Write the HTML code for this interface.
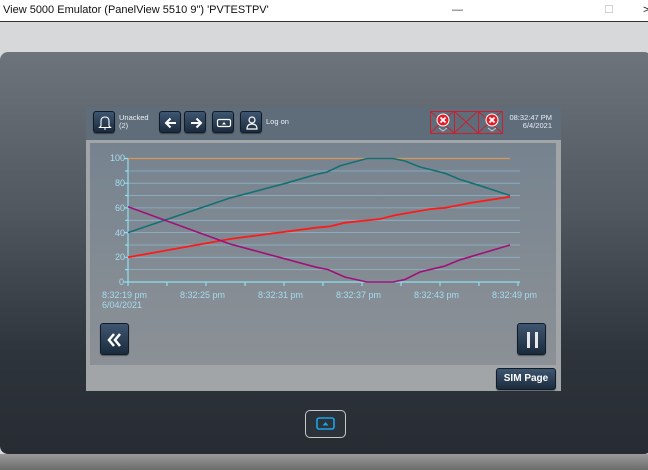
<!DOCTYPE html>
<html><head><style>
*{margin:0;padding:0;box-sizing:border-box}
body{width:648px;height:470px;overflow:hidden;background:#d6d8da;font-family:"Liberation Sans",sans-serif;position:relative}
.abs{position:absolute}
.title{left:0;top:0;width:648px;height:22px;background:#fff;border-bottom:1px solid #333;font-size:11px;color:#111;line-height:21px;padding-left:3px}
.bezel{left:0;top:52px;width:652px;height:402px;border-radius:8px;background:linear-gradient(#6d747b 0%,#50575f 40%,#2e343b 75%,#272c33 100%)}
.bottom{left:0;top:454px;width:648px;height:16px;background:linear-gradient(#9a9a9a,#6c6c6c)}
.screen{left:86px;top:107px;width:475px;height:284px;background:#a2a5a8}
.hdr{left:86px;top:107px;width:475px;height:33px;background:#5f6d7b}
.btn{position:absolute;border-radius:3px;background:linear-gradient(#3e5670,#1b2b3d);border:1px solid #111c28;box-shadow:0 1px 1px rgba(0,0,0,.4);color:#fff}
.chartbg{left:90px;top:143px;width:466px;height:222px;background:linear-gradient(#76838f,#868d94 70%,#8b9096)}
.lbl{position:absolute;font-size:9px;color:#a6dcef}
.w{color:#e8eef4;font-size:7.5px;line-height:8px}
</style></head><body>
<div class="abs title">View 5000 Emulator (PanelView 5510 9") 'PVTESTPV'<span style="position:absolute;left:452px;color:#444">—</span><span style="position:absolute;left:604px;color:#bbb">☐</span><span style="position:absolute;left:643px">&gt;</span></div>
<div class="abs bezel"></div>
<div class="abs bottom"></div>
<div class="abs screen"></div>
<div class="abs hdr"></div>
<div class="btn" style="left:93px;top:111px;width:22px;height:22px"><svg width="22" height="22"><path d="M7 14 L7 9 Q7 5 11 5 Q15 5 15 9 L15 14 L16.5 15.5 L5.5 15.5 Z M10 17 h2" stroke="#fff" fill="none" stroke-width="1.1"/></svg></div>
<div class="abs w" style="left:119px;top:114px">Unacked<br>(2)</div>
<div class="btn" style="left:159px;top:111px;width:22px;height:22px"><svg width="22" height="22"><path d="M16 11 H6 M10.5 6.5 L6 11 L10.5 15.5" stroke="#fff" fill="none" stroke-width="2"/></svg></div>
<div class="btn" style="left:184px;top:111px;width:22px;height:22px"><svg width="22" height="22"><path d="M6 11 H16 M11.5 6.5 L16 11 L11.5 15.5" stroke="#fff" fill="none" stroke-width="2"/></svg></div>
<div class="btn" style="left:212px;top:111px;width:22px;height:22px"><svg width="22" height="22"><rect x="4.5" y="7.5" width="13" height="7" rx="1.5" stroke="#fff" fill="none" stroke-width="1.2"/><path d="M9 12.5 L11 10 L13 12.5Z" fill="#fff"/></svg></div>
<div class="btn" style="left:240px;top:111px;width:22px;height:22px"><svg width="22" height="22"><circle cx="11" cy="8" r="3" stroke="#fff" fill="none" stroke-width="1.2"/><path d="M6 17 Q6 12 11 12 Q16 12 16 17 Z" stroke="#fff" fill="none" stroke-width="1.2"/></svg></div>
<div class="abs w" style="left:266px;top:118px">Log on</div>
<svg class="abs" style="left:430px;top:111px" width="74" height="23">
<g stroke="#c8202c" fill="none" stroke-width="1"><rect x="0.5" y="0.5" width="24" height="22"/><rect x="24.5" y="0.5" width="24" height="22"/><rect x="48.5" y="0.5" width="24" height="22"/><path d="M0 0L24 22M24 0L0 22M24 0L48 22M48 0L24 22M48 0L72 22M72 0L48 22"/></g>
<g><circle cx="13" cy="9" r="6" fill="#e0202c" stroke="#fff"/><path d="M10.5 6.5l5 5M15.5 6.5l-5 5" stroke="#fff" stroke-width="1.8"/><path d="M9 17l4 3 4-3" stroke="#ccc" fill="none"/></g>
<g><circle cx="62" cy="9" r="6" fill="#e0202c" stroke="#fff"/><path d="M59.5 6.5l5 5M64.5 6.5l-5 5" stroke="#fff" stroke-width="1.8"/><path d="M58 17l4 3 4-3" stroke="#ccc" fill="none"/></g>
</svg>
<div class="abs w" style="left:500px;top:114px;width:52px;text-align:right">08:32:47 PM<br>6/4/2021</div>
<div class="abs chartbg"></div>
<svg class="abs" style="left:0;top:0" width="648" height="470">
<g stroke="#93c0d8" stroke-width="0.8" opacity="0.8">
<line x1="128" x2="520" y1="171" y2="171"/><line x1="128" x2="520" y1="183.2" y2="183.2"/><line x1="128" x2="520" y1="195.5" y2="195.5"/><line x1="128" x2="520" y1="207.9" y2="207.9"/><line x1="128" x2="520" y1="220.3" y2="220.3"/><line x1="128" x2="520" y1="232.6" y2="232.6"/><line x1="128" x2="520" y1="245" y2="245"/><line x1="128" x2="520" y1="257.3" y2="257.3"/><line x1="128" x2="520" y1="269.6" y2="269.6"/>
</g>
<g stroke="#8fe0f0" stroke-width="1.2">
<line x1="128" x2="128" y1="158" y2="286"/><line x1="124" x2="520" y1="282" y2="282"/>
<path d="M124 158.5h4M124 183.2h4M124 207.9h4M124 232.6h4M124 257.3h4M125 171h3M125 195.5h3M125 220.3h3M125 245h3M125 269.6h3"/>
<path d="M167 282v4M206 282v4M245 282v4M284 282v4M323 282v4M362 282v4M401 282v4M440 282v4M479 282v4M518 282v4"/>
</g>
<line x1="128" x2="510" y1="158.5" y2="158.5" stroke="#d7955a" stroke-width="1.3"/>
<polyline fill="none" stroke="#137073" stroke-width="1.6" points="128,232.6 230,198 286,183.2 316,174.5 327,172 340,165.9 367,158.5 393,158.5 405,161 420,167 440,172 445,173.3 460,179.5 480,185.7 510,195.5"/>
<polyline fill="none" stroke="#ff1a1a" stroke-width="1.8" points="128,257.3 230,239 316,227.7 330,226.4 345,222.7 380,219 395,215.3 430,209.1 445,207.9 470,203 510,196.8"/>
<polyline fill="none" stroke="#a0107a" stroke-width="1.6" points="128,206.7 230,244 316,267.2 328,269.6 345,277.1 367,282 393,282 405,279.5 420,272 440,267.2 445,266 460,259.8 510,245"/>
</svg>
<div class="lbl" style="left:110px;top:153px">100</div>
<div class="lbl" style="left:115px;top:178px">80</div>
<div class="lbl" style="left:115px;top:203px">60</div>
<div class="lbl" style="left:115px;top:228px">40</div>
<div class="lbl" style="left:115px;top:252px">20</div>
<div class="lbl" style="left:119px;top:277px">0</div>
<div class="lbl" style="left:102px;top:290px">8:32:19 pm<br>6/04/2021</div>
<div class="lbl" style="left:180px;top:290px">8:32:25 pm</div>
<div class="lbl" style="left:258px;top:290px">8:32:31 pm</div>
<div class="lbl" style="left:336px;top:290px">8:32:37 pm</div>
<div class="lbl" style="left:414px;top:290px">8:32:43 pm</div>
<div class="lbl" style="left:492px;top:290px">8:32:49 pm</div>
<div class="btn" style="left:100px;top:323px;width:29px;height:32px"><svg width="29" height="32"><path d="M13 10 L8 16 L13 22 M19 10 L14 16 L19 22" stroke="#fff" fill="none" stroke-width="2.5"/></svg></div>
<div class="btn" style="left:517px;top:323px;width:29px;height:32px"><svg width="29" height="32"><rect x="9" y="8" width="3" height="16" fill="#e8e8e8"/><rect x="17" y="8" width="3" height="16" fill="#e8e8e8"/></svg></div>
<div class="btn" style="left:496px;top:368px;width:60px;height:22px;font-size:10px;font-weight:bold;text-align:center;line-height:20px">SIM Page</div>
<div class="abs" style="left:305px;top:410px;width:41px;height:28px;border:1.5px solid #c8c8c8;border-radius:5px;background:#2c3239"></div>
<svg class="abs" style="left:305px;top:410px" width="41" height="28"><rect x="12" y="8" width="17" height="11" rx="2" stroke="#19a5e8" stroke-width="1.6" fill="none"/><path d="M17.5 15.5L20.5 12L23.5 15.5Z" fill="#19a5e8"/></svg>
</body></html>
